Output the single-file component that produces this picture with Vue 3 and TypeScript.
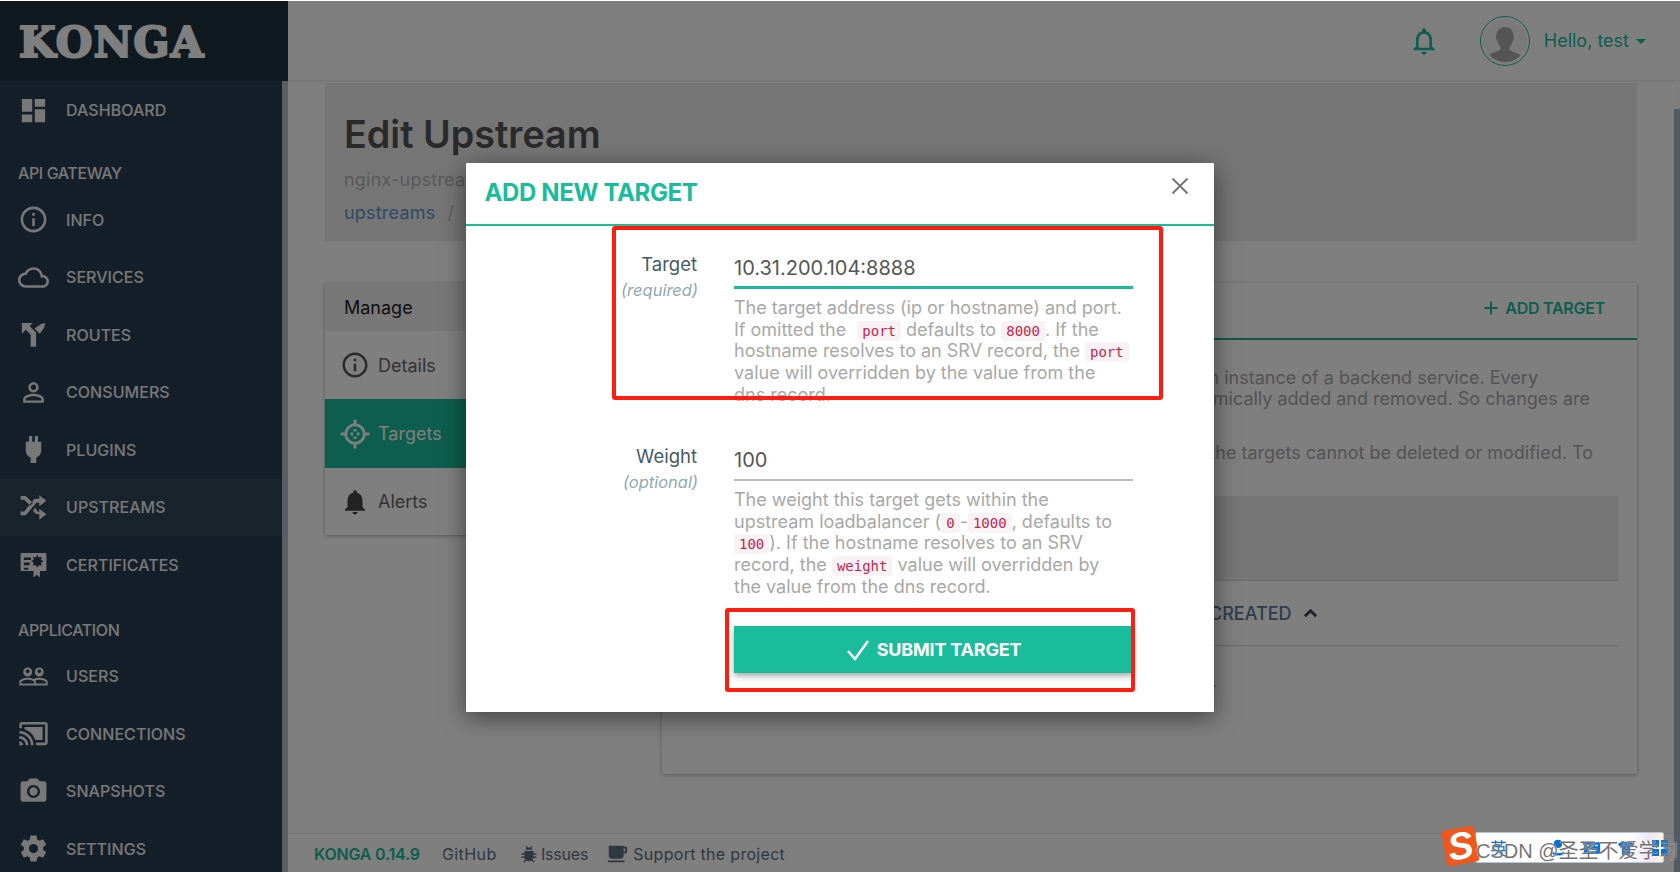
<script setup lang="ts">
interface NavItem { label: string; d: string; active?: boolean }
const P = {
  dash: 'M3 13h8V3H3v10zm0 8h8v-6H3v6zm10 0h8V11h-8v10zm0-18v6h8V3h-8z',
  info: 'M11 7h2v2h-2zm0 4h2v6h-2zm1-9C6.48 2 2 6.48 2 12s4.48 10 10 10 10-4.48 10-10S17.52 2 12 2zm0 18c-4.41 0-8-3.59-8-8s3.59-8 8-8 8 3.59 8 8-3.59 8-8 8z',
  cloud: 'M19.35 10.04C18.67 6.59 15.64 4 12 4 9.11 4 6.6 5.64 5.35 8.04 2.34 8.36 0 10.91 0 14c0 3.31 2.69 6 6 6h13c2.76 0 5-2.24 5-5 0-2.64-2.05-4.78-4.65-4.96zM19 18H6c-2.21 0-4-1.79-4-4s1.79-4 4-4h.71C7.37 7.69 9.48 6 12 6c3.04 0 5.5 2.46 5.5 5.5v.5H19c1.66 0 3 1.34 3 3s-1.34 3-3 3z',
  split: 'M3 3h8.500L9 5.500l5 5V21.500H9.800v-9.300L6 8.300 3 11.500zM14.800 9.500L12.800 7.300l5-3.500L21 3l-.6 3.300-3.400 5.200z',
  person: 'M12 5.9c1.16 0 2.1.94 2.1 2.1s-.94 2.1-2.1 2.1S9.9 9.16 9.9 8s.94-2.1 2.1-2.1m0 9c2.97 0 6.1 1.46 6.1 2.1v1.1H5.9V17c0-.64 3.13-2.1 6.1-2.1M12 4C9.79 4 8 5.79 8 8s1.79 4 4 4 4-1.79 4-4-1.79-4-4-4zm0 9c-2.67 0-8 1.34-8 4v3h16v-3c0-2.66-5.33-4-8-4z',
  plug: 'M8.500 1.500h2.500V6H8.500zM13 1.500h2.500V6H13zM6 6h12v6.500c0 3-1.900 5-3.800 5.600V22.500H9.800v-4.400C7.900 17.500 6 15.500 6 12.500z',
  shuffle: 'M11.500 8.600L6 3H2v3h2.800l4.600 4.700zM16.500 2.500L22 6.800l-5.500 4.300V8.300h-2.300L6 18H2v-3h2.800l8-9.700h3.700zM13.700 12.200l-2.100 2.200 1.400 1.700c.8.900 1.500 1.200 2.500 1.200h1V21.500L22 17.200 16.500 13v2.200h-.8c-.4 0-.7-.1-1-.4z',
  cert: 'M3 3h18a1 1 0 0 1 1 1v12a1 1 0 0 1-1 1h-4v5l-2.500-2-2.500 2v-5H3a1 1 0 0 1-1-1V4a1 1 0 0 1 1-1zm1.500 3.500v2H10v-2zm0 4v2H9v-2zm0 4v1.500H8V14.500zM15 4.500l-1.100 2-2.200-.5.400 2.300-1.900 1.200 1.900 1.200-.4 2.300 2.200-.5 1.100 2 1.100-2 2.200.5-.4-2.300 1.900-1.200-1.900-1.200.4-2.300-2.200.5z',
  people: 'M16.500 13c-1.200 0-3.070.34-4.500 1-1.430-.67-3.300-1-4.500-1C5.330 13 1 14.080 1 16.250V19h22v-2.750c0-2.170-4.330-3.250-6.500-3.250zm-4 4.500h-10v-1.250c0-.54 2.560-1.750 5-1.750s5 1.210 5 1.750v1.250zm9 0H14v-1.250c0-.46-.2-.86-.52-1.220.88-.3 1.960-.53 3.020-.53 2.440 0 5 1.210 5 1.750v1.250zM7.500 12c1.930 0 3.500-1.570 3.500-3.500S9.430 5 7.500 5 4 6.570 4 8.500 5.570 12 7.500 12zm0-5.500c.83 0 1.500.67 1.500 1.500s-.67 1.500-1.500 1.500S6 8.830 6 8s.67-1.500 1.500-1.500zm9 5.500c1.930 0 3.500-1.570 3.500-3.500S18.430 5 16.500 5 13 6.570 13 8.500s1.570 3.500 3.500 3.500zm0-5.500c.83 0 1.500.67 1.500 1.500s-.67 1.500-1.500 1.500S15 8.830 15 8s.67-1.500 1.500-1.500z',
  cast: 'M1 18v3h3c0-1.660-1.340-3-3-3zm0-4v2c2.760 0 5 2.240 5 5h2c0-3.870-3.130-7-7-7zm18-7H5v1.630c3.960 1.280 7.090 4.410 8.370 8.370H19V7zM1 10v2c4.970 0 9 4.030 9 9h2c0-6.080-4.930-11-11-11zm20-7H3c-1.100 0-2 .9-2 2v3h2V5h18v14h-7v2h7c1.100 0 2-.9 2-2V5c0-1.100-.9-2-2-2z',
  camera: 'M9 2L7.170 4H4c-1.100 0-2 .9-2 2v12c0 1.100.9 2 2 2h16c1.100 0 2-.9 2-2V6c0-1.100-.9-2-2-2h-3.170L15 2H9zm3 15c-2.760 0-5-2.240-5-5s2.240-5 5-5 5 2.240 5 5-2.240 5-5 5zm0-1.800a3.200 3.200 0 1 0 0-6.400 3.200 3.200 0 0 0 0 6.400z',
  gear: 'M19.430 12.980c.04-.32.07-.64.07-.98s-.03-.66-.07-.98l2.110-1.650c.19-.15.24-.42.12-.64l-2-3.460c-.12-.22-.39-.3-.61-.22l-2.490 1c-.52-.4-1.080-.73-1.690-.98l-.38-2.650C14.460 2.180 14.250 2 14 2h-4c-.25 0-.46.18-.49.42l-.38 2.650c-.61.25-1.170.59-1.690.98l-2.490-1c-.23-.09-.49 0-.61.22l-2 3.460c-.13.22-.07.49.12.64l2.110 1.650c-.04.32-.07.65-.07.98s.03.66.07.98l-2.110 1.650c-.19.15-.24.42-.12.64l2 3.460c.12.22.39.3.61.22l2.490-1c.52.4 1.080.73 1.690.98l.38 2.650c.03.24.24.42.49.42h4c.25 0 .46-.18.49-.42l.38-2.650c.61-.25 1.170-.59 1.690-.98l2.490 1c.23.09.49 0 .61-.22l2-3.460c.12-.22.07-.49-.12-.64l-2.110-1.650zM12 15.500c-1.930 0-3.500-1.570-3.500-3.500s1.570-3.500 3.500-3.500 3.500 1.570 3.500 3.500-1.570 3.500-3.500 3.500z',
  bellO: 'M12 22c1.100 0 2-.9 2-2h-4c0 1.100.9 2 2 2zm6-6v-5c0-3.070-1.630-5.640-4.500-6.320V4c0-.83-.67-1.500-1.500-1.500s-1.500.67-1.500 1.500v.68C7.640 5.360 6 7.920 6 11v5l-2 2v1h16v-1l-2-2zm-2 1H8v-6c0-2.480 1.510-4.500 4-4.500s4 2.020 4 4.500v6z',
  bell: 'M12 22c1.100 0 2-.9 2-2h-4c0 1.100.89 2 2 2zm6-6v-5c0-3.070-1.640-5.640-4.500-6.320V4c0-.83-.67-1.500-1.500-1.500s-1.500.67-1.500 1.500v.68C7.630 5.360 6 7.920 6 11v5l-2 2v1h16v-1l-2-2z',
  target: 'M10.800 0.500h2.400v3a8.600 8.600 0 0 1 7.300 7.300h3v2.400h-3a8.600 8.600 0 0 1-7.300 7.300v3h-2.400v-3a8.600 8.600 0 0 1-7.300-7.300h-3v-2.400h3a8.600 8.600 0 0 1 7.300-7.300zM12 5.700a6.300 6.300 0 1 0 0 12.600 6.300 6.300 0 0 0 0-12.600zM8.500 10.800h2v2.400h-2zm5 0h2v2.400h-2zM10.800 8h2.400v2h-2.400zm0 6h2.400v2h-2.400z',
  bug: 'M9 2l1.600 2.200h2.800L15 2l1.200.9-1.400 2c.9.5 1.500 1.200 1.700 2.100h-9c.2-.9.8-1.600 1.700-2.100l-1.400-2zM6.500 8.500h11V11H21v1.800h-3.500V15H21v1.800h-3.700c-.2.7-.5 1.300-.9 1.800l2.400 2.400-1.300 1.300-2.400-2.400c-.8.500-1.700.8-3.100.8s-2.300-.3-3.100-.8L6.500 22.300 5.200 21l2.400-2.400c-.4-.5-.7-1.100-.9-1.800H3V15h3.500v-2.200H3V11h3.500z',
  cup: 'M2 3h17v1h2a2 2 0 0 1 2 2v4a2 2 0 0 1-2 2h-2v2a4 4 0 0 1-4 4H6a4 4 0 0 1-4-4zm17 3v4h1.500V6zM1 20h19v2H1z',
};
const topItems: NavItem[] = [{ label: 'DASHBOARD', d: P.dash }];
const gatewayItems: NavItem[] = [
  { label: 'INFO', d: P.info },
  { label: 'SERVICES', d: P.cloud },
  { label: 'ROUTES', d: P.split },
  { label: 'CONSUMERS', d: P.person },
  { label: 'PLUGINS', d: P.plug },
  { label: 'UPSTREAMS', d: P.shuffle, active: true },
  { label: 'CERTIFICATES', d: P.cert },
];
const appItems: NavItem[] = [
  { label: 'USERS', d: P.people },
  { label: 'CONNECTIONS', d: P.cast },
  { label: 'SNAPSHOTS', d: P.camera },
  { label: 'SETTINGS', d: P.gear },
];
const manageItems = [
  { label: 'Details', d: P.info, active: false },
  { label: 'Targets', d: P.target, active: true },
  { label: 'Alerts', d: P.bell, active: false },
];
</script>

<template>
  <div class="root">
    <aside class="sidebar">
      <div class="logo">KONGA</div>
      <nav class="nav">
        <a v-for="it in topItems" :key="it.label" class="nav-item">
          <svg viewBox="0 0 24 24" class="nav-ic"><path :d="it.d" /></svg><span>{{ it.label }}</span>
        </a>
        <div class="nav-title first">API GATEWAY</div>
        <a v-for="it in gatewayItems" :key="it.label" class="nav-item" :class="{ active: it.active }">
          <svg viewBox="0 0 24 24" class="nav-ic"><path :d="it.d" fill-rule="evenodd" /></svg><span>{{ it.label }}</span>
        </a>
        <div class="nav-title">APPLICATION</div>
        <a v-for="it in appItems" :key="it.label" class="nav-item">
          <svg viewBox="0 0 24 24" class="nav-ic"><path :d="it.d" fill-rule="evenodd" /></svg><span>{{ it.label }}</span>
        </a>
      </nav>
    </aside>

    <div class="main">
      <header class="topbar">
        <svg viewBox="0 0 24 24" class="bell"><path :d="P.bellO" /></svg>
        <div class="avatar">
          <svg viewBox="0 0 44 44" class="avatar-img">
            <circle cx="22" cy="22" r="22" fill="#f4f4f4" />
            <path d="M22 8c5.500 0 8.500 4 8.500 9 .8.200.9 3-.6 4.500-.7 3-2 5-3.400 6.500v3c1 1.500 8 2.500 11 5.500A21 21 0 0 1 22 43 21 21 0 0 1 6.500 36c3-3 10-4 11-5.500v-3c-1.400-1.500-2.700-3.500-3.400-6.500-1.500-1.500-1.400-4.300-.6-4.500C13.500 12 16.500 8 22 8z" fill="#ababab" />
          </svg>
        </div>
        <div class="hello">Hello, test<i class="caret"></i></div>
      </header>

      <div class="content">
        <section class="page-head">
          <h1>Edit Upstream</h1>
          <div class="sub">nginx-upstream</div>
          <div class="crumbs"><a>upstreams</a><span class="sep">/</span><span class="cur">edit</span></div>
        </section>

        <div class="columns">
          <div class="manage">
            <div class="manage-head">Manage</div>
            <a v-for="m in manageItems" :key="m.label" class="manage-item" :class="{ on: m.active }">
              <svg viewBox="0 0 24 24" class="m-ic"><path :d="m.d" fill-rule="evenodd" /></svg>{{ m.label }}
            </a>
          </div>

          <div class="card">
            <div class="card-head">
              <a class="add"><svg viewBox="0 0 16 16" class="plus"><path d="M8 1.500v13M1.500 8h13" /></svg>ADD TARGET</a>
            </div>
            <div class="card-body">
              <p class="ln l1">A target is an ip address/hostname with a port that identifies an instance of a backend service. Every</p>
              <p class="ln l2">upstream can have many targets, and the targets can be dynamically added and removed. So changes are</p>
              <p class="ln l3">Because the upstream maintains a history of changes, the targets cannot be deleted or modified. To</p>
              <div class="table-tools"></div>
              <div class="table-head">CREATED<svg viewBox="0 0 16 10" class="chev"><path d="M2 8.500l6-6 6 6" /></svg></div>
              <div class="table-empty">No data found.</div>
            </div>
          </div>
        </div>
      </div>

      <footer class="footer">
        <b>KONGA 0.14.9</b>
        <a class="f-github">GitHub</a>
        <a class="f-link f-issues"><svg viewBox="0 0 24 24" class="f-bug"><path :d="P.bug" /></svg>Issues</a>
        <a class="f-link f-support"><svg viewBox="0 0 24 24" class="f-cup"><path :d="P.cup" fill-rule="evenodd" /></svg>Support the project</a>
      </footer>
      <div class="page-scroll"><div class="page-thumb"></div></div>
    </div>

    <div class="backdrop">
      <div class="modal">
        <div class="modal-head">
          <h3>ADD NEW TARGET</h3>
          <svg viewBox="0 0 20 20" class="close"><path d="M2.500 2.500l15 15M17.500 2.500l-15 15" /></svg>
        </div>
        <div class="modal-body">
          <div class="field">
            <label>Target<em>(required)</em></label>
            <div>
              <div class="input focus">10.31.200.104:8888</div>
              <p class="help">The target address (ip or hostname) and port.<br />If omitted the <code class="pushed">port</code> defaults to <code>8000</code>. If the<br />hostname resolves to an SRV record, the <code>port</code><br />value will overridden by the value from the<br />dns record.</p>
            </div>
          </div>
          <div class="field second">
            <label>Weight<em>(optional)</em></label>
            <div>
              <div class="input">100</div>
              <p class="help">The weight this target gets within the<br />upstream loadbalancer (<code>0</code>-<code>1000</code>, defaults to<br /><code>100</code>). If the hostname resolves to an SRV<br />record, the <code>weight</code> value will overridden by<br />the value from the dns record.</p>
            </div>
          </div>
          <div class="field">
            <span></span>
            <button class="submit"><svg viewBox="0 0 24 24" class="check"><path d="M2 13l7 8L22 3" /></svg>SUBMIT TARGET</button>
          </div>
        </div>
      </div>
    </div>

    <div class="mark mark-a"></div>
    <div class="mark mark-b"></div>

    <div class="ime">
      <div class="ime-s">S</div>
      <span class="ime-t">英</span>
      <i class="ime-dot"></i>
      <svg viewBox="0 0 18 22" class="ime-ic"><circle cx="9" cy="6" r="5" /><path d="M2 15c2 3 12 3 14 0v3c-2 3-12 3-14 0z" /></svg>
      <svg viewBox="0 0 22 18" class="ime-ic"><path fill-rule="evenodd" d="M1 2h20v14H1zm3 3v2h3V5zm5 0v2h4V5zm6 0v2h3V5zM6 11v2h10v-2z" /></svg>
      <svg viewBox="0 0 22 20" class="ime-ic"><path d="M7 1l4 2 4-2 6 4-3 4-2-1v11H6V8L4 9 1 5z" /></svg>
      <svg viewBox="0 0 18 18" class="ime-ic"><path d="M1 1h7v7H1zM10 1h7v7h-7zM1 10h7v7H1zM10 10h7v7h-7z" /></svg>
      <div class="wm">CSDN @圣圣不爱学习</div>
    </div>
  </div>
</template>

<style>
html, body { margin: 0; padding: 0; height: 100%; overflow: hidden; background: #fff; }
</style>

<style scoped>
.root {
  position: relative; height: 872px; box-sizing: border-box; padding-top: 1px;
  display: flex; overflow: hidden; background: #fff; color: #555;
  font-family: Inter, "Noto Sans", sans-serif;
}
a { text-decoration: none; color: inherit; }
p { margin: 0; }

/* sidebar */
.sidebar { width: 288px; flex: none; display: flex; flex-direction: column; background: #b2bfcb; }
.logo {
  flex: none; height: 80px; background: #203240; color: #fff; padding-left: 19px; box-sizing: border-box;
  font: 700 42px/84px "DejaVu Serif", serif; -webkit-text-stroke: 2.2px #fff; letter-spacing: 1.400px;
}
.nav { width: 282px; flex: 1; background: #2a3f52; color: #f0f0f0; }
.nav-item { display: flex; align-items: center; height: 57.500px; font-size: 16px; font-weight: 500; letter-spacing: .05px; padding-left: 18px; }
.nav-item.active { background: #304658; }
.nav-ic { width: 31px; height: 31px; fill: #f0f0f0; margin-right: 17px; flex: none; }
.nav-item:first-child { height: 58px; }
.nav-title { font-size: 16px; font-weight: 500; letter-spacing: -.4px; padding-left: 18px; height: 36px; line-height: 36px; margin-top: 18px; }
.nav-title.first { margin-top: 16px; }

/* main */
.main { flex: 1; min-width: 0; position: relative; display: flex; flex-direction: column; }
.topbar { height: 79px; flex: none; border-bottom: 2px solid #efefef; display: flex; align-items: center; justify-content: flex-end; padding-right: 34px; }
.bell { width: 32px; height: 32px; fill: #1abc9c; margin-right: 40px; }
.avatar { width: 50px; height: 50px; box-sizing: border-box; border: 1px solid #1abc9c; border-radius: 50%; padding: 2px; margin-right: 14px; }
.avatar-img { display: block; width: 44px; height: 44px; }
.hello { font-size: 18px; color: #1abc9c; display: flex; align-items: center; }
.caret { border: 5px solid transparent; border-top-color: #1abc9c; border-bottom: 0; margin-left: 7px; margin-top: 2px; }
.content { flex: 1; padding: 1px 37px 0; min-height: 0; margin-right: 6px; }
.page-head { height: 158px; box-sizing: border-box; background: #ededed; padding: 29px 19px 0; }
h1 { margin: 0; font-size: 37.700px; line-height: 44px; font-weight: 600; color: #555; }
.sub { font-size: 18px; color: #b4b4b4; margin-top: 12px; line-height: 24px; letter-spacing: .2px; }
.crumbs { font-size: 18px; line-height: 24px; margin-top: 9px; color: #bbb; letter-spacing: .2px; }
.crumbs a { color: #5f93c9; }
.sep { margin: 0 12px; }
.columns { display: grid; grid-template-columns: 315px 975px; column-gap: 22px; margin-top: 42px; align-items: start; }
.manage { background: #fff; box-shadow: 0 1px 4px rgba(0,0,0,.3); }
.manage-head { height: 48px; line-height: 49px; padding-left: 19px; font-size: 18px; color: #222; background: #f1f1f1; }
.manage-item { display: flex; align-items: center; height: 67px; padding-left: 15px; font-size: 18px; color: #666; }
.manage-item:nth-child(2) { height: 68px; }
.manage-item.on { background: #1abc9c; color: #fff; height: 69px; }
.m-ic { width: 30px; height: 30px; fill: #555; margin-right: 8px; }
.manage-item.on .m-ic { fill: #fff; }
.manage-item:last-child .m-ic { fill: #444; }
.card { height: 491px; background: #fff; box-shadow: 0 1px 4px rgba(0,0,0,.3); }
.card-head { height: 50px; padding-bottom: 5px; border-bottom: 2px solid #26a88e; display: flex; align-items: center; justify-content: flex-end; padding-right: 32px; }
.add { display: flex; align-items: center; color: #1abc9c; font-size: 16px; font-weight: 600; letter-spacing: -.25px; }
.plus { width: 16px; height: 16px; fill: none; stroke: #1abc9c; stroke-width: 2; margin-right: 6px; }
.card-body { padding-top: 27px; }
.ln { font-size: 18px; line-height: 21px; color: #a8a8a8; white-space: nowrap; text-align: right; }
.l1 { padding-right: 99px; }
.l2 { padding-right: 47px; }
.l3 { padding-right: 44px; margin-top: 33px; }
.table-tools { height: 85px; background: #ededed; margin: 33px 19px 0; border-bottom: 1px solid #d8d8d8; box-sizing: border-box; }
.table-head { height: 65px; margin: 0 19px; border-bottom: 1px solid #d8d8d8; box-sizing: border-box; display: flex; align-items: center; padding-left: 528px; color: #5a7a9a; font-size: 18px; font-weight: 500; }
.chev { width: 15px; height: 10px; fill: none; stroke: #445; stroke-width: 3; margin-left: 11px; }
.table-empty { margin: 24px 0 0 19px; width: 536px; text-align: right; font-size: 18px; color: #999; white-space: nowrap; }
.footer { position: relative; height: 37px; flex: none; border-top: 1px solid #ececec; margin-right: 6px; background: #fff; display: flex; align-items: center; padding-left: 26px; padding-top: 1px; font-size: 16px; color: #5f7083; }
.footer b { color: #1abc9c; font-weight: 600; width: 128px; letter-spacing: -.2px; }
.f-github { width: 77px; letter-spacing: .4px; }
.f-link { display: flex; align-items: center; }
.f-issues { margin-right: 19px; letter-spacing: -.2px; }
.f-support { letter-spacing: .3px; }
.f-bug { width: 20px; height: 20px; fill: #5f7083; margin-right: 2px; }
.f-cup { width: 21px; height: 21px; fill: #5f7083; margin-right: 5px; }
.page-scroll { position: absolute; right: 0; top: 80px; bottom: 0; width: 6px; background: #fdfdfd; }
.page-thumb { margin-top: 28px; height: calc(100% - 28px); background: #a5b8cc; }

/* modal */
.backdrop { position: absolute; inset: 1px 0 0 0; background: rgba(0,0,0,.5); display: flex; justify-content: center; align-items: flex-start; padding-top: 162px; box-sizing: border-box; }
.modal { width: 748px; height: 549px; background: #fff; box-shadow: 0 5px 25px rgba(0,0,0,.5); border-radius: 1px; }
.modal-head { height: 61px; border-bottom: 2px solid #1abc9c; display: flex; justify-content: space-between; align-items: flex-start; padding: 0 24px 0 18.500px; }
h3 { margin: 0; color: #1abc9c; font-size: 24px; line-height: 60px; font-weight: 700; letter-spacing: -.35px; }
.close { width: 20px; height: 20px; margin-top: 13px; fill: none; stroke: #777; stroke-width: 2; }
.modal-body { padding-top: 22px; }
.field { display: grid; grid-template-columns: 231px 399px; column-gap: 37px; margin-bottom: 34.500px; }
.field.second { margin-bottom: 28.500px; }
.field label { text-align: right; font-size: 18.500px; line-height: 24px; color: #455a64; padding-top: 4px; }
.field em { display: block; color: #90a8b4; margin-top: 2px; font-size: 16.500px; margin-right: -1px; }
.input { height: 41px; box-sizing: border-box; border-bottom: 2px solid #bbb; font-size: 20px; line-height: 41px; color: #555; }
.input.focus { border-bottom: 3px solid #1abc9c; }
.help { margin-top: 8px; font-size: 18px; line-height: 21.700px; color: #a8a8a8; white-space: nowrap; }
code { font-family: "DejaVu Sans Mono", monospace; font-size: 14px; line-height: 1; color: #c7254e; background: #f9f2f4; padding: 2px 5px; border-radius: 4px; }
code.pushed { margin-left: 6px; }
.submit { width: 399px; height: 47px; border: 0; background: #1abc9c; color: #fff; font: 700 18px Inter, sans-serif; letter-spacing: -.2px; display: flex; align-items: center; justify-content: center; box-shadow: 0 3px 6px rgba(0,0,0,.35); }
.check { width: 24px; height: 24px; fill: none; stroke: #fff; stroke-width: 2.500; margin-right: 7px; }

/* screenshot annotations */
.mark { position: absolute; border: 4px solid #ff1d12; border-radius: 3px; box-sizing: border-box; }
.mark-a { left: 612px; top: 226px; width: 551px; height: 174px; }
.mark-b { left: 725px; top: 608px; width: 410px; height: 84px; }

.ime { position: absolute; left: 1475px; top: 832px; width: 189px; height: 31px; box-sizing: border-box; background: linear-gradient(90deg, #fff 82%, #f0e6f6 92%, #fbf3d8); border: 1px solid #b6c6d6; border-radius: 2px; display: flex; align-items: center; gap: 16px; padding-left: 14px; color: #0a6fd6; font-size: 17px; }
.ime-t { font-family: "Noto Sans CJK SC", "DejaVu Sans", sans-serif; line-height: 1; }
.ime-dot { width: 5px; height: 5px; border-radius: 50%; background: #0a6fd6; margin-right: 10px; }
.ime-ic { width: 18px; height: 18px; fill: #0a6fd6; flex: none; }
.ime-s { position: absolute; left: -32px; top: -5px; width: 33px; height: 36px; border-radius: 4px; background: #f0571c; color: #fff; transform: rotate(-10deg); font: italic 700 38px/36px "Liberation Sans", sans-serif; text-align: center; }
.wm { position: absolute; left: 0; top: 5px; white-space: nowrap; color: rgba(90,90,90,.85); font-size: 20px; line-height: 26px; font-family: "Liberation Sans", "Noto Sans CJK SC", sans-serif; text-shadow: 0 0 1px #fff; }
</style>
